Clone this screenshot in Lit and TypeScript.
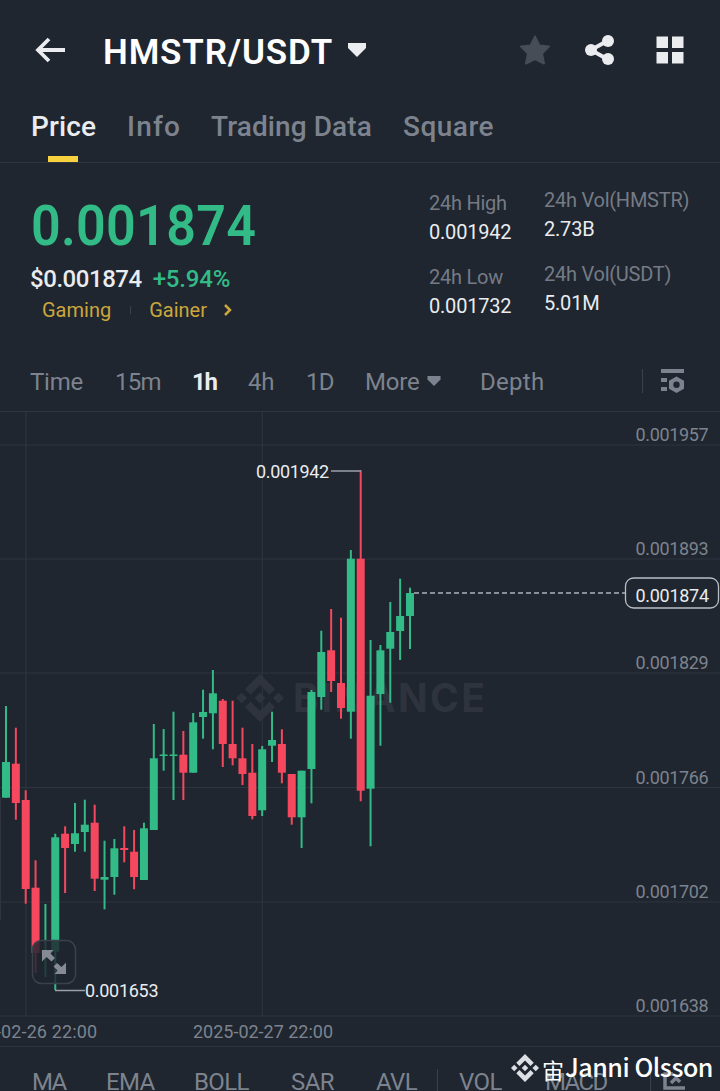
import { LitElement, html, svg, css } from "lit";
import { customElement, property } from "lit/decorators.js";

type Candle = [up: 0 | 1, high: number, top: number, bottom: number, low: number];

/* Candle geometry in chart units, one entry per hour. */
const CANDLES: Candle[] = [
  [1, 706, 762, 797.7, 797.7], [0, 727.7, 763.7, 803, 819.7], [0, 790.3, 800, 889, 903.7],
  [0, 860.3, 887.7, 953, 973], [1, 904, 951, 953, 977], [1, 833.7, 837.3, 951.7, 990],
  [0, 826.3, 833.7, 848, 893], [1, 803, 833.3, 844, 851.7], [1, 799.7, 824.7, 832, 851.7],
  [0, 804.7, 822.7, 878.7, 891], [1, 840.7, 877, 879.7, 909.3], [1, 839, 848.3, 877, 894.7],
  [0, 826.3, 848, 850, 862.3], [0, 830, 851.7, 877, 889.3], [1, 822.7, 828.3, 880, 880],
  [1, 724, 758.3, 830, 830], [1, 729, 754.5, 756, 770.7], [1, 711.7, 754.5, 756, 800],
  [0, 731, 754.7, 772.7, 800], [1, 713, 722.3, 772.7, 772.7], [1, 689.7, 712, 717, 738.7],
  [1, 670, 693.3, 713.3, 749.3], [0, 699, 700.7, 744, 767], [0, 700.7, 744, 758.3, 765.3],
  [0, 727.7, 758.3, 774, 785], [0, 744, 772.7, 816, 819.3], [1, 746, 749.3, 810.3, 816],
  [1, 711.7, 740, 745.7, 762], [0, 729.3, 744, 772.7, 783.3], [0, 774, 774, 817.3, 824.7],
  [1, 770.7, 770.7, 817.3, 848], [1, 690, 692, 769, 803.3], [1, 630.7, 652, 697, 709.7],
  [0, 609, 650.3, 681, 692], [0, 617.7, 683, 708, 718.7], [1, 550, 558.7, 711.7, 738.7],
  [0, 470.3, 558.7, 790.7, 801.3], [1, 640, 695.7, 788.7, 846.3], [1, 645, 650.3, 694, 745.7],
  [1, 602, 632, 648.7, 702.7], [1, 578.7, 616, 631, 660], [1, 587.7, 593, 616, 649],
];

const AXIS: [label: string, line: number][] = [
  ["0.001957", 445], ["0.001893", 559], ["0.001829", 673],
  ["0.001766", 787.5], ["0.001702", 902], ["0.001638", 1016],
];

const diamond = (x: number, y: number, r: number) =>
  svg`<path d="M${x} ${y - r}L${x + r} ${y}L${x} ${y + r}L${x - r} ${y}Z"/>`;

/* Five-piece diamond mark on a 48-unit square. */
const mark = svg`
  <path d="M24 0L39 15L33.5 20.5L24 11L14.500 20.5L9 15Z"/>
  <path d="M24 48L39 33L33.500 27.5L24 37L14.500 27.5L9 33Z"/>
  ${diamond(24, 24, 5.6)}${diamond(5.600, 24, 5.6)}${diamond(42.400, 24, 5.6)}`;

@customElement("price-chart")
export class PriceChart extends LitElement {
  static styles = css`
    :host { display: block; height: 636px; }
    svg { display: block; font-family: Roboto, "Liberation Sans", sans-serif; }
    .grid { stroke: #2e353f; stroke-width: 1.2; fill: none; }
    .up { fill: #32bb87; stroke: #32bb87; }
    .down { fill: #f5485f; stroke: #f5485f; }
    .body { stroke: none; }
    .wick { stroke-width: 2; }
    .axis { fill: #7d838e; font-size: 18px; }
    .note { fill: #eaecef; font-size: 18px; }
    .leader { stroke: #9a9fa9; stroke-width: 1.4; }
    .dash { stroke: #aeb3bb; stroke-width: 1.5; stroke-dasharray: 5 3; }
    .tag { fill: #1f262f; stroke: #b9bdc6; stroke-width: 1.3; }
    .watermark { fill: #2e333d; }
    .brand { font: 700 39px Inter, sans-serif; }
    .expand { fill: #1f262f; fill-opacity: 0.82; stroke: #3b414c; stroke-width: 1.5; }
    .arrows { fill: #858a94; }
  `;

  render() {
    return html`<svg width="720" height="636" viewBox="0 411 720 636">
      <g class="grid">
        <path d="M0 411.500H720M0 1046.500H720M26 411V1016M262.300 411V1016M.5 797V920" />
        ${AXIS.map(([, y]) => svg`<path d="M0 ${y}H720"/>`)}
      </g>
      <g class="watermark">
        <g transform="translate(236 674)">${mark}</g>
        <text class="brand" x="293" y="711.500" textLength="192">BINANCE</text>
      </g>
      ${CANDLES.map(([up, high, top, bottom, low], i) => {
        const x = 6 + i * 9.853;
        return svg`<g class=${up ? "up" : "down"}>
          <path class="wick" d="M${x} ${high}V${low}"/>
          <rect class="body" x=${x - 4} y=${top} width="8" height=${bottom - top}/>
        </g>`;
      })}
      <path class="leader" d="M331 471H361M55 990.500H85" />
      <text class="note" x="256" y="478" textLength="73">0.001942</text>
      <text class="note" x="85" y="997" textLength="73.500">0.001653</text>
      <path class="dash" d="M414 593H625" />
      <rect class="tag" x="625.500" y="578" width="93" height="30" rx="8" />
      <text class="note" x="635.500" y="601.500" textLength="73.500">0.001874</text>
      ${AXIS.map(([t, y]) => svg`<text class="axis" x="635.500" y=${y - 4} textLength="73">${t}</text>`)}
      <text class="axis" x="-45" y="1038" textLength="142">2025-02-26 22:00</text>
      <text class="axis" x="193" y="1038" textLength="140">2025-02-27 22:00</text>
      <rect class="expand" x="32.500" y="940.500" width="43" height="43" rx="9" />
      <path class="arrows" d="M42 950H53.500L50.500 953.500L55 958L51.500 961.500L46.500 957L42 961.500ZM66 974H54.500L57.500 970.500L53.500 966.500L57 963L61.500 967L66 962.500Z" />
    </svg>`;
  }
}

@customElement("stat-cell")
export class StatCell extends LitElement {
  @property() label = "";
  @property() value = "";
  static styles = css`
    :host { display: flex; flex-direction: column; height: 74px; white-space: nowrap; }
    .label { font-size: 20px; line-height: 29px; color: #757b86; letter-spacing: -0.25px; }
    .value { font-size: 20px; line-height: 29px; color: #eaecef; font-weight: 450; letter-spacing: -0.2px; }
  `;
  render() {
    return html`<span class="label">${this.label}</span><span class="value">${this.value}</span>`;
  }
}

@customElement("app-root")
export class AppRoot extends LitElement {
  static styles = css`
    :host {
      display: block; position: relative; width: 720px; height: 1091px; overflow: hidden;
      background: #1f262f; color: #eaecef; white-space: nowrap;
      font-family: Roboto, "Liberation Sans", sans-serif;
    }
    svg { display: block; flex: none; }
    .bar { display: flex; align-items: center; height: 100px; padding: 0 36px 0 35px; box-sizing: border-box; }
    .pair { margin: 4px 14px 0 37px; font-size: 35px; font-weight: 600; letter-spacing: 0.85px; color: #fff; }
    .actions { display: flex; align-items: center; gap: 34px; margin-left: auto; }
    .grid-icon { margin-left: 7px; }
    .tabs {
      display: grid; grid-template-columns: 96px 84px 192px auto; height: 63px; padding-left: 31px;
      box-sizing: border-box; border-bottom: 1px solid #30353f;
      font-size: 28px; font-weight: 500; line-height: 53px; color: #7d838e;
    }
    .tab { display: flex; flex-direction: column; justify-content: space-between; letter-spacing: 0.1px; }
    .tab:nth-child(2) { letter-spacing: 1.2px; }
    .tab:nth-child(4) { letter-spacing: 0.5px; }
    .tab.active { color: #eaecef; }
    .tab.active::after { content: ""; width: 30px; height: 6px; margin-left: 17px; background: #f7d23e; }
    .summary { display: flex; height: 190px; }
    .quote { display: flex; flex-direction: column; width: 429px; padding: 30px 0 0 30px; box-sizing: border-box; }
    .last {
      height: 72px; padding-left: 1px; line-height: 66px; font-size: 56px; font-weight: 600; color: #32bb87;
      letter-spacing: 0.3px; transform: scaleX(0.93); transform-origin: left;
    }
    .fiat { display: flex; gap: 11px; height: 28px; line-height: 28px; font-size: 24px; font-weight: 500; letter-spacing: -0.45px; }
    .change { color: #32bb87; letter-spacing: -0.2px; }
    .tags { display: flex; align-items: center; height: 34px; padding-left: 12px; font-size: 20px; color: #cba63c; }
    .split { width: 1px; height: 8px; margin: 0 18px 0 19px; background: #3b414c; }
    .chevron { margin-left: 16px; }
    .high { width: 115px; padding-top: 26px; }
    .volume { padding-top: 23px; }
    .periods {
      display: grid; grid-template-columns: 85px 77px 56px 58px 59px 115px 162px auto; align-items: center;
      height: 58px; padding-left: 30px; font-size: 24px; color: #7d838e;
    }
    .period { display: flex; align-items: center; gap: 8px; letter-spacing: -0.2px; }
    .period:nth-child(2), .period:nth-child(5) { letter-spacing: -0.8px; }
    .period:nth-child(7) { letter-spacing: 0.3px; }
    .period.active { color: #eaecef; font-weight: 700; letter-spacing: -1.2px; }
    .caret { margin-bottom: 3px; }
    .rule { width: 1px; height: 24px; background: #3b414c; }
    .settings { display: flex; align-items: center; gap: 17px; margin-bottom: 2px; }
    .indicators {
      display: grid; grid-template-columns: 74px 88px 97px 85px 61px 22px 86px 105px 13px auto; height: 70px;
      padding-left: 32px; line-height: 71px; font-size: 24px; color: #7d838e; letter-spacing: -0.6px;
    }
    .indicators span:first-child, .indicators span:nth-child(8) { letter-spacing: -1.6px; }
    .indicators .rule { margin-top: 22px; }
    .panel { margin-top: 25px; }
    .credit {
      position: absolute; left: 511px; top: 1052px; display: flex; align-items: center; height: 31px;
      color: #fff; font: 500 25px/31px "Noto Sans CJK SC", "Noto Sans", sans-serif;
    }
    .name { margin-bottom: 3px; letter-spacing: -0.45px; }
    .cjk { margin: 3px 1px 0 3px; font: 400 22px/26px "Noto Sans CJK SC", sans-serif; }
  `;

  render() {
    return html`
      <header class="bar">
        <svg width="31" height="26" viewBox="0 0 31 26" fill="none" stroke="#eaecef" stroke-width="3.800">
          <path d="M30 13H4M14 2L3 13L14 24" />
        </svg>
        <span class="pair">HMSTR/USDT</span>
        <svg width="20" height="16" viewBox="0 0 20 16" fill="#eaecef"><path d="M1 1H19V6L10 15L1 6Z" /></svg>
        <div class="actions">
          <svg width="32" height="32" viewBox="0 0 32 32" fill="#474d57" stroke="#474d57" stroke-width="2" stroke-linejoin="round">
            <path d="M16 2.500L20.300 11.500L30 12.500L23 19.500L25 29.500L16 25L7 29.500L9 19.500L2 12.500L11.700 11.500Z" />
          </svg>
          <svg width="30" height="32" viewBox="0 0 30 32" fill="#eaecef">
            <path d="M23 6.500L6 16L23 25.500" fill="none" stroke="#eaecef" stroke-width="4" />
            <circle cx="6" cy="16" r="6" /><circle cx="23" cy="7" r="6" /><circle cx="23" cy="25" r="6" />
          </svg>
          <svg class="grid-icon" width="28" height="28" viewBox="0 0 28 28" fill="#eaecef">
            <path d="M.5 .5H12V12H.5ZM16 .5H27.500V12H16ZM.5 16H12V27.500H.5ZM16 16H27.500V27.500H16Z" />
          </svg>
        </div>
      </header>
      <nav class="tabs">
        <span class="tab active">Price</span><span class="tab">Info</span>
        <span class="tab">Trading Data</span><span class="tab">Square</span>
      </nav>
      <section class="summary">
        <div class="quote">
          <div class="last">0.001874</div>
          <div class="fiat"><span>$0.001874</span><span class="change">+5.94%</span></div>
          <div class="tags">
            <span>Gaming</span><i class="split"></i><span>Gainer</span>
            <svg class="chevron" width="10" height="12" viewBox="0 0 10 12" fill="none" stroke="#cba63c" stroke-width="2.500">
              <path d="M2 1L7 6L2 11" />
            </svg>
          </div>
        </div>
        <div class="high">
          <stat-cell label="24h High" value="0.001942"></stat-cell>
          <stat-cell label="24h Low" value="0.001732"></stat-cell>
        </div>
        <div class="volume">
          <stat-cell label="24h Vol(HMSTR)" value="2.73B"></stat-cell>
          <stat-cell label="24h Vol(USDT)" value="5.01M"></stat-cell>
        </div>
      </section>
      <nav class="periods">
        <span class="period">Time</span><span class="period">15m</span><span class="period active">1h</span>
        <span class="period">4h</span><span class="period">1D</span>
        <span class="period">More<svg class="caret" width="14" height="10" viewBox="0 0 14 10" fill="#7d838e"><path d="M.5 0H13.500V3.500L7 10L.5 3.500Z" /></svg></span>
        <span class="period">Depth</span>
        <span class="settings"><i class="rule"></i>
          <svg width="25" height="24" viewBox="0 0 25 24" fill="#7d838e">
            <path d="M1 0H24V4H1ZM1 9H7V13H1ZM1 18H7V22H1Z" />
            <path fill-rule="evenodd" d="M16.500 7.500L24 11.700V19.800L16.500 24L9 19.800V11.700ZM16.500 12.500A3.200 3.200 0 1 0 16.500 18.900A3.200 3.200 0 1 0 16.500 12.500Z" />
          </svg>
        </span>
      </nav>
      <price-chart></price-chart>
      <nav class="indicators">
        <span>MA</span><span>EMA</span><span>BOLL</span><span>SAR</span><span>AVL</span><i class="rule"></i>
        <span>VOL</span><span>MACD</span><i class="rule"></i>
        <svg class="panel" width="22" height="22" viewBox="0 0 22 22" fill="none" stroke="#7d838e" stroke-width="3.500">
          <path d="M10 2H2V16H22M8 11L13 6L17 10" />
        </svg>
      </nav>
      <div class="credit">
        <svg width="28" height="28" viewBox="0 0 48 48" fill="#dcdfe4">${mark}</svg>
        <span class="cjk">宙</span><span class="name">Janni Olsson</span>
      </div>
    `;
  }
}
